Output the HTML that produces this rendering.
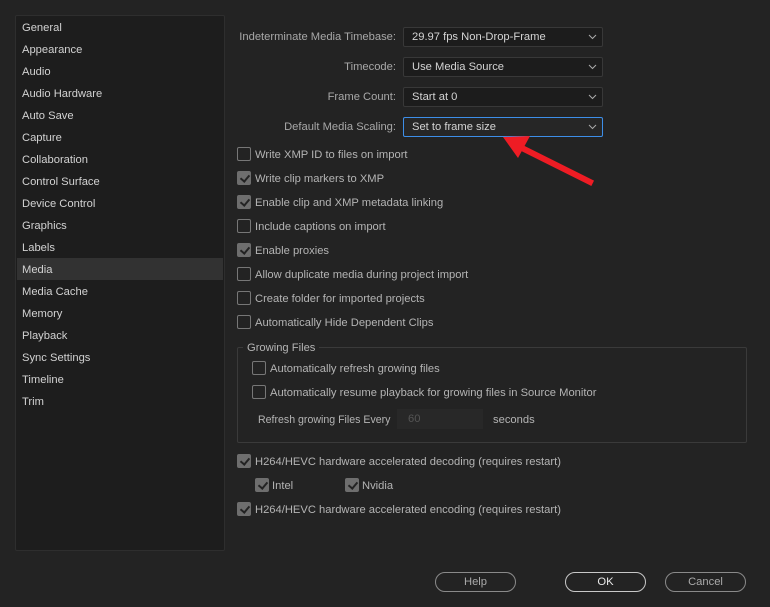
<!DOCTYPE html>
<html><head><style>
*{margin:0;padding:0;box-sizing:border-box}
body{width:770px;height:607px;background:#232323;font-family:"Liberation Sans",sans-serif;font-size:11.2px;color:#c4c4c4;position:relative;overflow:hidden}
.a{position:absolute;white-space:nowrap}
#list{position:absolute;left:15px;top:15px;width:210px;height:536px;background:#1d1d1d;border:1px solid #2e2e2e;border-radius:2px}
.li{position:absolute;left:6px;height:22px;line-height:24px;width:206px;color:#d2d2d2}
.lbl{position:absolute;right:374px;text-align:right;color:#a8a8a8;top:0}
.dd{position:absolute;left:403px;width:200px;height:20px;background:#1c1c1c;border:1px solid #383838;border-radius:2px;line-height:19px;padding-left:8px;color:#d4d4d4}
.dd svg{position:absolute;right:5px;top:6px}
.cb{position:absolute;width:14px;height:14px;border:1.5px solid #777;border-radius:2px}
.cb.on{background:#6e6e6e;border-color:#6e6e6e}
.cb.on:after{content:"";position:absolute;left:3.5px;top:0.5px;width:4px;height:7px;border:solid #232323;border-width:0 2px 2px 0;transform:rotate(40deg)}
.t{position:absolute;color:#b4b4b4;line-height:16px;white-space:nowrap}
.btn{position:absolute;top:572px;width:81px;height:20px;border:1px solid #8a8a8a;border-radius:10px;text-align:center;line-height:19px;color:#aaa}
</style></head><body>
<div id="list">
<div class="li" style="top:0">General</div>
<div class="li" style="top:22px">Appearance</div>
<div class="li" style="top:44px">Audio</div>
<div class="li" style="top:66px">Audio Hardware</div>
<div class="li" style="top:88px">Auto Save</div>
<div class="li" style="top:110px">Capture</div>
<div class="li" style="top:132px">Collaboration</div>
<div class="li" style="top:154px">Control Surface</div>
<div class="li" style="top:176px">Device Control</div>
<div class="li" style="top:198px">Graphics</div>
<div class="li" style="top:220px">Labels</div>
<div class="li" style="top:242px;left:1px;padding-left:5px;background:#323232">Media</div>
<div class="li" style="top:264px">Media Cache</div>
<div class="li" style="top:286px">Memory</div>
<div class="li" style="top:308px">Playback</div>
<div class="li" style="top:330px">Sync Settings</div>
<div class="li" style="top:352px">Timeline</div>
<div class="li" style="top:374px">Trim</div>
</div>

<div class="lbl" style="top:31px">Indeterminate Media Timebase:</div>
<div class="lbl" style="top:61px">Timecode:</div>
<div class="lbl" style="top:91px">Frame Count:</div>
<div class="lbl" style="top:121px">Default Media Scaling:</div>
<div class="dd" style="top:27px">29.97 fps Non-Drop-Frame<svg width="9" height="6"><path d="M1 1L4.5 4.5L8 1" stroke="#aaa" fill="none"/></svg></div>
<div class="dd" style="top:57px">Use Media Source<svg width="9" height="6"><path d="M1 1L4.5 4.5L8 1" stroke="#aaa" fill="none"/></svg></div>
<div class="dd" style="top:87px">Start at 0<svg width="9" height="6"><path d="M1 1L4.5 4.5L8 1" stroke="#aaa" fill="none"/></svg></div>
<div class="dd" style="top:117px;border-color:#3d8ee8;background:#262626">Set to frame size<svg width="9" height="6"><path d="M1 1L4.5 4.5L8 1" stroke="#aaa" fill="none"/></svg></div>

<div class="cb" style="left:237px;top:147px"></div><div class="t" style="left:255px;top:147px">Write XMP ID to files on import</div>
<div class="cb on" style="left:237px;top:171px"></div><div class="t" style="left:255px;top:171px">Write clip markers to XMP</div>
<div class="cb on" style="left:237px;top:195px"></div><div class="t" style="left:255px;top:195px">Enable clip and XMP metadata linking</div>
<div class="cb" style="left:237px;top:219px"></div><div class="t" style="left:255px;top:219px">Include captions on import</div>
<div class="cb on" style="left:237px;top:243px"></div><div class="t" style="left:255px;top:243px">Enable proxies</div>
<div class="cb" style="left:237px;top:267px"></div><div class="t" style="left:255px;top:267px">Allow duplicate media during project import</div>
<div class="cb" style="left:237px;top:291px"></div><div class="t" style="left:255px;top:291px">Create folder for imported projects</div>
<div class="cb" style="left:237px;top:315px"></div><div class="t" style="left:255px;top:315px">Automatically Hide Dependent Clips</div>

<div class="a" style="left:237px;top:347px;width:510px;height:96px;border:1px solid #3a3a3a;border-radius:2px"></div>
<div class="t" style="left:243px;top:340px;background:#232323;padding:0 4px">Growing Files</div>
<div class="cb" style="left:252px;top:361px"></div><div class="t" style="left:270px;top:361px">Automatically refresh growing files</div>
<div class="cb" style="left:252px;top:385px"></div><div class="t" style="left:270px;top:385px">Automatically resume playback for growing files in Source Monitor</div>
<div class="t" style="left:258px;top:412px;font-size:10.6px">Refresh growing Files Every</div>
<div class="a" style="left:397px;top:409px;width:86px;height:20px;background:#282828;color:#555;padding-left:11px;line-height:20px">60</div>
<div class="t" style="left:493px;top:412px">seconds</div>

<div class="cb on" style="left:237px;top:454px"></div><div class="t" style="left:255px;top:454px">H264/HEVC hardware accelerated decoding (requires restart)</div>
<div class="cb on" style="left:255px;top:478px"></div><div class="t" style="left:272px;top:478px">Intel</div>
<div class="cb on" style="left:345px;top:478px"></div><div class="t" style="left:362px;top:478px">Nvidia</div>
<div class="cb on" style="left:237px;top:502px"></div><div class="t" style="left:255px;top:502px">H264/HEVC hardware accelerated encoding (requires restart)</div>

<div class="btn" style="left:435px">Help</div>
<div class="btn" style="left:565px;border-color:#c8c8c8;color:#e8e8e8">OK</div>
<div class="btn" style="left:665px">Cancel</div>

<svg class="a" style="left:0;top:0" width="770" height="607"><path d="M590 182L520 147" stroke="#ee1c24" stroke-width="6" stroke-linecap="square"/><path d="M503 137L530 136L518 158Z" fill="#ee1c24"/></svg>
</body></html>
